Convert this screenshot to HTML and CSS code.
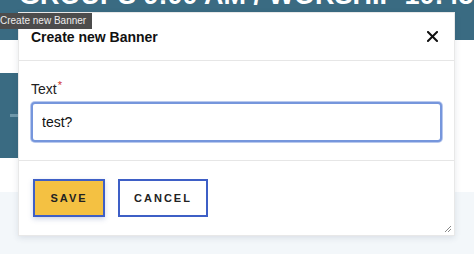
FILE: index.html
```html
<!DOCTYPE html>
<html lang="en">

<head>
    <meta charset="UTF-8">
    <meta name="viewport" content="width=device-width, initial-scale=1.0">
    <title>Create new Banner</title>
    <link rel="stylesheet" href="styles.css">
</head>

<body>
    <div class="page">
        <header class="hero">
            <h1 class="hero-title">GROUPS 9:00 AM / WORSHIP 10:45 AM</h1>
        </header>
        <section class="content">
            <div class="feature">
                <div class="feature-dash"></div>
            </div>
        </section>
        <section class="strip"></section>
    </div>

    <div class="dialog">
        <div class="dialog-header">
            <h2 class="dialog-title">Create new Banner</h2>
            <button class="close-button" aria-label="Close">
                <svg width="11" height="11" viewBox="0 0 11 11">
                    <path d="M1 1 L10 10 M10 1 L1 10" stroke="#111" stroke-width="2" stroke-linecap="square" />
                </svg>
            </button>
        </div>
        <div class="dialog-body">
            <label class="field-label" for="bannerText">Text<span class="required">*</span></label>
            <input id="bannerText" class="text-input" type="text" value="test?">
        </div>
        <div class="dialog-footer">
            <button class="button button-save">SAVE</button>
            <button class="button button-cancel">CANCEL</button>
        </div>
        <div class="resize-handle">
            <svg width="8" height="8" viewBox="0 0 8 8">
                <path d="M7 1 L1 7 M7 4 L4 7" stroke="#888" stroke-width="1" />
            </svg>
        </div>
    </div>

    <div class="tooltip">Create new Banner</div>
</body>

</html>
```

FILE: styles.css
```css
body,
html {
    margin: 0;
    padding: 0;
    font-family: "Liberation Sans", Arial, sans-serif;
    height: 100%;
    overflow: hidden;
}

.page {
    display: flex;
    flex-direction: column;
    height: 100vh;
}

.hero {
    height: 40px;
    flex-shrink: 0;
    background-color: #3a6b82;
    overflow: hidden;
}

.hero-title {
    margin: -20px 0 0 19px;
    font-size: 27px;
    line-height: 30px;
    font-weight: bold;
    color: white;
    white-space: nowrap;
}

.content {
    height: 152px;
    flex-shrink: 0;
    background-color: white;
    padding-top: 33px;
    box-sizing: border-box;
}

.feature {
    width: 300px;
    height: 85px;
    background-color: #3a6b82;
    display: flex;
    align-items: center;
}

.feature-dash {
    margin-left: 10px;
    width: 8px;
    height: 3px;
    background-color: #6f98aa;
}

.strip {
    flex: 1;
    background-color: #f3f7fa;
}

.tooltip {
    position: absolute;
    top: 13px;
    left: -1px;
    padding: 2px 6px 2px 1px;
    background-color: #4c4c4c;
    color: #eeeeee;
    font-size: 10px;
    line-height: 12px;
    white-space: nowrap;
}

.dialog {
    position: absolute;
    top: 12px;
    left: 18px;
    width: 437px;
    height: 224px;
    background-color: white;
    border: 1px solid #e8e8e8;
    box-sizing: border-box;
    box-shadow: 0 2px 6px rgba(40, 60, 90, 0.12);
    display: flex;
    flex-direction: column;
}

.dialog-header {
    height: 48px;
    display: flex;
    align-items: center;
    justify-content: space-between;
    padding: 0 16px 0 12px;
    border-bottom: 1px solid #e6e6e6;
    box-sizing: border-box;
}

.dialog-title {
    margin: 0;
    font-size: 14px;
    font-weight: bold;
    color: #111;
}

.close-button {
    border: none;
    background: none;
    padding: 0;
    display: flex;
    cursor: pointer;
}

.dialog-body {
    height: 100px;
    padding: 20px 12px 0 12px;
    border-bottom: 1px solid #e6e6e6;
    box-sizing: border-box;
}

.field-label {
    display: block;
    font-size: 14px;
    line-height: 16px;
    color: #222;
    margin-bottom: 5px;
}

.required {
    color: #d0342c;
    font-size: 11px;
    vertical-align: top;
    position: relative;
    top: -4px;
    margin-left: 1px;
}

.text-input {
    display: block;
    width: 100%;
    height: 40px;
    box-sizing: border-box;
    border: 2px solid #7696dc;
    border-radius: 4px;
    box-shadow: 0 0 0 1px #b9c9ee;
    padding: 0 9px;
    font-family: "Liberation Sans", Arial, sans-serif;
    font-size: 14px;
    color: #111;
    outline: none;
}

.dialog-footer {
    display: flex;
    gap: 13px;
    padding: 18px 14px 0 14px;
}

.button {
    height: 38px;
    border: 2px solid #3e5fc6;
    border-radius: 0;
    font-family: "Liberation Sans", Arial, sans-serif;
    font-size: 11px;
    font-weight: bold;
    letter-spacing: 2px;
    color: #222;
    cursor: pointer;
}

.button-save {
    width: 72px;
    background-color: #f4c142;
    box-shadow: 0 2px 5px rgba(60, 90, 160, 0.25);
}

.button-cancel {
    width: 90px;
    background-color: white;
}

.resize-handle {
    position: absolute;
    right: 2px;
    bottom: 2px;
    display: flex;
}
```
